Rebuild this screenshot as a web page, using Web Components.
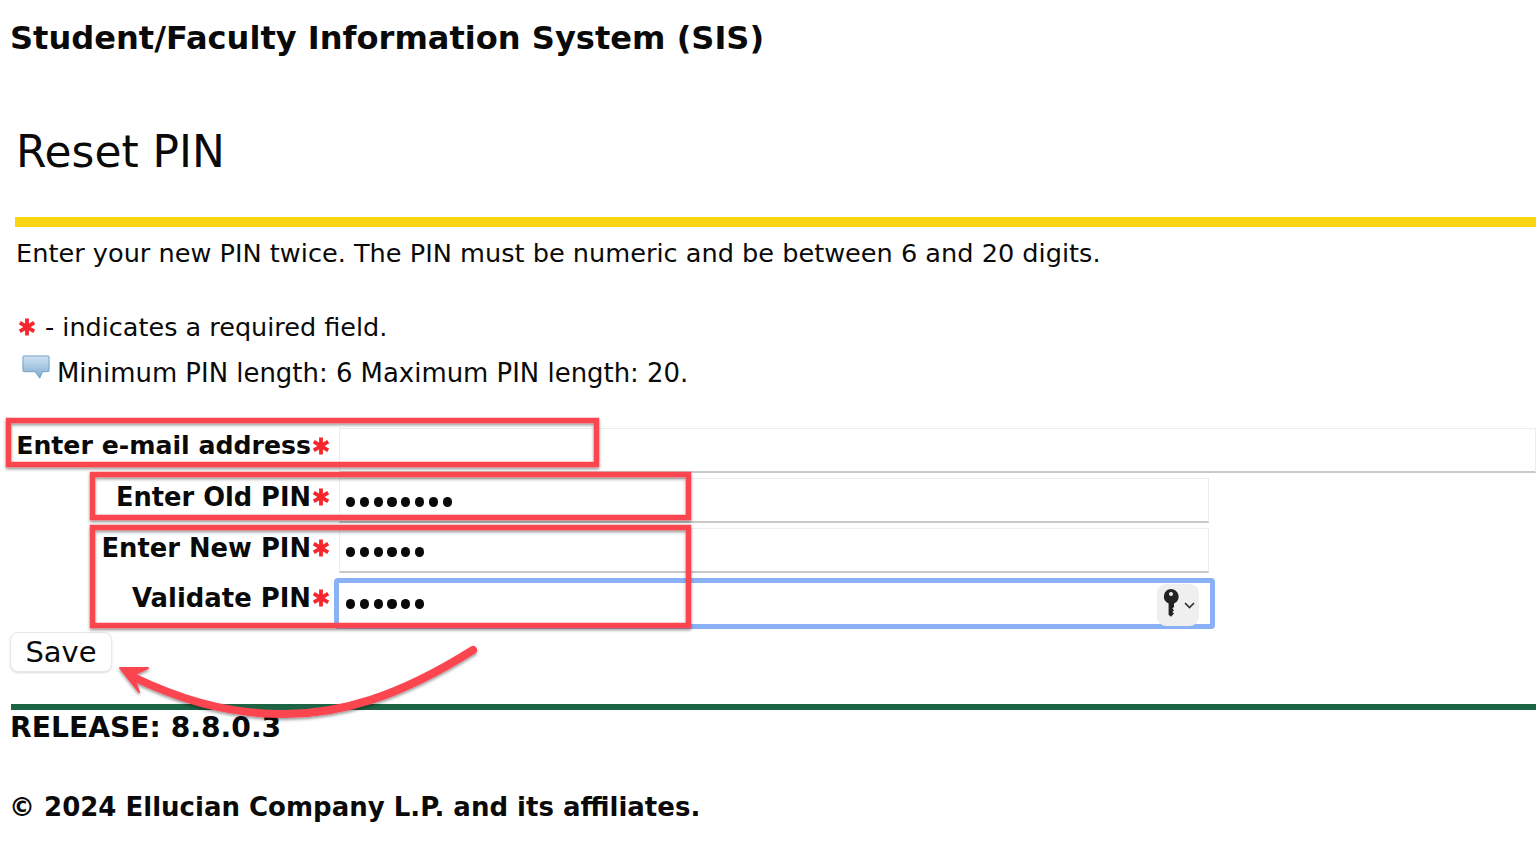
<!DOCTYPE html>
<html><head><meta charset="utf-8">
<style>
html,body{margin:0;padding:0;background:#fff;overflow:hidden}
body{width:1536px;height:847px;font-family:"DejaVu Sans",sans-serif;color:#0a0a0a;position:relative}
</style></head><body>
<sis-page></sis-page>
<script>
class Base extends HTMLElement{
  constructor(){super();this.attachShadow({mode:'open'}).innerHTML=this.constructor.html;}
}
const star=`<svg viewBox="0 0 18 18" width="18" height="18" style="display:block"><g stroke="#f5262c" stroke-width="3.800" stroke-linecap="butt"><path d="M9 .5v17M1.800 4.700l14.400 8.600M16.200 4.700L1.800 13.300"/></g></svg>`;
class ReqStar extends Base{static html=`<style>:host{display:inline-block;width:18px;height:18px}</style>${star}`}
customElements.define('req-star',ReqStar);

class FormRow extends Base{static html=`<style>
:host{display:grid;grid-template-columns:330px 1fr;column-gap:9px;align-items:stretch}
.l{display:flex;justify-content:flex-end;align-items:center;font-weight:700;font-size:var(--fs,25.8px);color:#0a0a0a;white-space:nowrap;padding-bottom:var(--lp,0)}
.l req-star{margin-left:1px}
</style><div class="l"><slot name="label"></slot><req-star></req-star></div><slot></slot>`}
customElements.define('form-row',FormRow);

class PinInput extends Base{
  static html=`<style>
:host{display:flex;align-items:center;box-sizing:border-box;border:1px solid #ececec;border-bottom:2px solid #c9c9c9;height:var(--h,45px);width:var(--w,870px);padding:4px 0 0 6px;position:relative}
:host([focused]){border:5px solid #8ab0f5;border-radius:4px;margin-left:-5px;width:881px;height:51px;padding:1px 0 0 7px}
.d{display:flex;gap:4.500px}
.d i{display:block;width:9.300px;height:9.300px;border-radius:50%;background:#0a0a0a}
.k{position:absolute;right:11px;top:1px;width:42px;height:42px;border-radius:9px;background:#efefef;display:none;align-items:center;justify-content:center}
:host([focused]) .k{display:flex}
</style><div class="d"></div><div class="k"><svg width="38" height="36" viewBox="0 0 38 36"><path fill="#222" fill-rule="evenodd" d="M12 2a7.600 7.600 0 0 1 3 14.600V20l-1.600 1.600 1.600 1.700-1.600 1.600 1.600 1.600-3 3.200-2.400-2V16.600A7.600 7.600 0 0 1 12 2zm0 3a2 2 0 1 0 0 4 2 2 0 0 0 0-4z"/><path d="M26 16l4.500 4.500L35 16" fill="none" stroke="#333" stroke-width="1.700"/></svg></div>`;
  connectedCallback(){const n=+this.getAttribute('dots')||0;this.shadowRoot.querySelector('.d').innerHTML='<i></i>'.repeat(n);}
}
customElements.define('pin-input',PinInput);

class SisPage extends Base{static html=`<style>
:host{display:block;width:1536px;height:847px;position:relative;overflow:hidden}
h1{margin:0;padding:19px 0 0 10px;font-size:32.100px;line-height:38px;font-weight:700;white-space:nowrap}
h2{margin:0;padding:0 0 0 16px;font-size:43.900px;font-weight:400;line-height:52px;margin-top:69px}
.y{height:10px;background:#fbd50f;margin:39px 0 0 15px}
p{margin:0;font-size:25.600px;line-height:32px;white-space:nowrap}
.intro{margin:10px 0 0 16px}
.req{margin:42px 0 0 18px;display:flex;align-items:center;gap:9px;font-size:25.500px}
.min{margin:14px 0 0 22px;display:flex;gap:7px;align-items:flex-start;font-size:25.930px}
.min svg{display:block;margin-top:-2px}
form{display:block;margin-top:39px}
form-row{margin-bottom:5px}
form-row.v{margin-bottom:0}
button{display:block;margin:3px 0 0 10px;width:102px;height:40px;box-sizing:border-box;border:1px solid #e8e8e8;border-radius:8px;background:#fff;box-shadow:0 1px 2px #0002;font:400 29px "DejaVu Sans",sans-serif;color:#0a0a0a;padding:0}
.g{height:6px;background:#1b6544;margin:32px 0 0 11px}
.rel{margin:0 0 0 10px;font-weight:700;font-size:28.200px;line-height:36px;white-space:nowrap}
.copy{margin:43px 0 0 9px;font-weight:700;font-size:26px;line-height:36px;white-space:nowrap}
svg.a{position:absolute;left:0;top:0;pointer-events:none}
</style>
<h1>Student/Faculty Information System (SIS)</h1>
<h2>Reset PIN</h2>
<div class="y"></div>
<p class="intro">Enter your new PIN twice. The PIN must be numeric and be between 6 and 20 digits.</p>
<p class="req"><req-star></req-star><span>- indicates a required field.</span></p>
<p class="min"><svg width="28" height="25" viewBox="0 0 30 27" preserveAspectRatio="none"><defs><linearGradient id="b" x1="0" y1="0" x2="0" y2="1"><stop offset="0" stop-color="#cfe2f2"/><stop offset="1" stop-color="#7fabd1"/></linearGradient></defs><path d="M2 1h26a1 1 0 0 1 1 1v15a1 1 0 0 1-1 1h-6l-3 7-5-7H2a1 1 0 0 1-1-1V2a1 1 0 0 1 1-1z" fill="url(#b)" stroke="#6d9cc4"/></svg><span>Minimum PIN length: 6 Maximum PIN length: 20.</span></p>
<form>
<form-row style="--lp:10px;--fs:25.200px"><span slot="label">Enter e-mail address</span><pin-input style="--w:100%;margin-right:-1px"></pin-input></form-row>
<form-row style="--lp:8px;--fs:25.700px"><span slot="label">Enter Old PIN</span><pin-input dots="8"></pin-input></form-row>
<form-row style="--lp:6px"><span slot="label">Enter New PIN</span><pin-input dots="6"></pin-input></form-row>
<form-row class="v" style="--lp:12px;--fs:25.900px"><span slot="label">Validate PIN</span><pin-input dots="6" focused></pin-input></form-row>
<button type="button">Save</button>
</form>
<div class="g"></div>
<p class="rel">RELEASE: 8.8.0.3</p>
<p class="copy">© 2024 Ellucian Company L.P. and its affiliates.</p>
<svg class="a" width="1536" height="847" viewBox="0 0 1536 847" fill="none">
<defs><filter id="s" x="-5%" y="-5%" width="110%" height="115%"><feDropShadow dx="0" dy="2" stdDeviation="1.500" flood-color="#000" flood-opacity=".4"/></filter></defs>
<g filter="url(#s)" stroke="#fb4450" stroke-width="5.500">
<rect x="8.500" y="420.500" width="588" height="44"/>
<rect x="92.500" y="474.500" width="596" height="43"/>
<rect x="92.500" y="527.500" width="596" height="98"/>
<path d="M473 650C400 696 340 715 280 714C220 713 175 697 131 676" stroke-linecap="round" stroke-width="8"/>
<path d="M120 668L148 668L133 675L139 692Z" fill="#fb4450" stroke="#fb4450" stroke-width="2" stroke-linejoin="round"/>
</g></svg>`}
customElements.define('sis-page',SisPage);
</script>
</body></html>
